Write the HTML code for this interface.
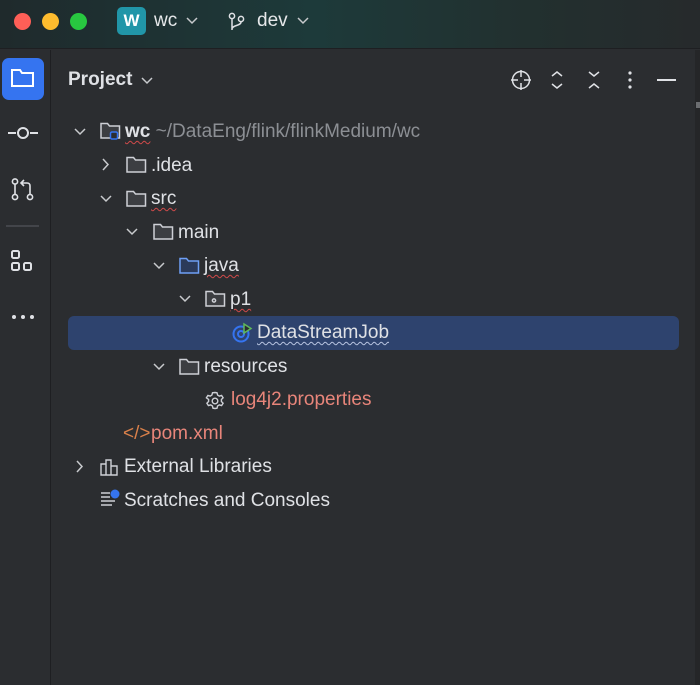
<!DOCTYPE html>
<html><head><style>
*{margin:0;padding:0;box-sizing:border-box}
body{width:700px;height:685px;background:#2b2d30;font-family:"Liberation Sans",sans-serif;color:#dfe1e5;position:relative;overflow:hidden}
.title{position:absolute;left:0;top:0;width:700px;height:49px;background:linear-gradient(90deg,#1f2a2c 0%,#1d3a3a 45%,#22302f 75%,#262a2c 100%);border-bottom:1px solid #1e1f22}
.dot{position:absolute;top:13px;width:17px;height:17px;border-radius:50%}
.side{position:absolute;left:0;top:50px;width:51px;height:635px;border-right:1px solid #1e1f22;background:#2b2d30}
.a{position:absolute}
.t{position:absolute;font-size:19px;line-height:22px;white-space:nowrap}
.u{text-decoration:underline wavy #d04a4a;text-decoration-thickness:1px;text-underline-offset:3px}
svg{position:absolute;overflow:visible}
</style></head><body>
<div class="title">
<div class="dot" style="left:14px;background:#fe5f57"></div>
<div class="dot" style="left:42px;background:#febc2e"></div>
<div class="dot" style="left:70px;background:#28c840"></div>
<div class="a" style="left:117px;top:7px;width:29px;height:28px;border-radius:5px;background:#2196a8;color:#fff;font-weight:bold;font-size:17px;text-align:center;line-height:28px">W</div>
<div class="t" style="left:154px;top:10px;color:#e6e8ea">wc</div>
<svg style="left:186px;top:17px" width="12" height="8"><path d="M1 1l5 5 5-5" stroke="#c8cacd" stroke-width="1.5" fill="none"/></svg>
<svg style="left:228px;top:12px" width="18" height="20" fill="none" stroke="#dfe1e5" stroke-width="1.5"><circle cx="4" cy="4" r="2.6"/><circle cx="13" cy="7" r="2.6"/><path d="M4 7v11M13 10c0 4-9 3-9 7"/></svg>
<div class="t" style="left:257px;top:10px;color:#e6e8ea">dev</div>
<svg style="left:297px;top:17px" width="12" height="8"><path d="M1 1l5 5 5-5" stroke="#c8cacd" stroke-width="1.5" fill="none"/></svg>
</div>
<div class="side">
<div class="a" style="left:2px;top:8px;width:42px;height:42px;border-radius:7px;background:#3574f0"></div>
<svg style="left:11px;top:18px" width="24" height="20" fill="none" stroke="#fff" stroke-width="2"><path d="M1 2h8l2 3h11v13H1z"/></svg>
<svg style="left:8px;top:76px" width="30" height="14" fill="none" stroke="#dfe1e5" stroke-width="2"><path d="M0 7h8M22 7h8"/><circle cx="15" cy="7" r="5"/></svg>
<svg style="left:11px;top:128px" width="24" height="24" fill="none" stroke="#dfe1e5" stroke-width="1.6"><circle cx="4" cy="3.5" r="2.6"/><circle cx="4" cy="19" r="2.6"/><circle cx="19" cy="19" r="2.6"/><path d="M4 6v10M19 16v-8c0-2-1-3-3-3h-5M13 2l-3 3 3 3"/></svg>
<div class="a" style="left:6px;top:175px;width:33px;height:2px;background:#43454a"></div>
<svg style="left:11px;top:200px" width="24" height="24" fill="none" stroke="#dfe1e5" stroke-width="2"><rect x="1" y="1" width="7" height="7" rx="1.5"/><rect x="1" y="13" width="7" height="7" rx="1.5"/><rect x="13" y="13" width="7" height="7" rx="1.5"/></svg>
<svg style="left:12px;top:264px" width="24" height="6" fill="#dfe1e5"><circle cx="2" cy="3" r="2"/><circle cx="11" cy="3" r="2"/><circle cx="20" cy="3" r="2"/></svg>
</div>
<div class="a" style="left:695px;top:50px;width:5px;height:635px;background:#252628"></div>
<div class="a" style="left:696px;top:102px;width:4px;height:6px;background:#6b6d70"></div>

<div class="t" style="left:68px;top:69px;font-weight:bold;color:#dfe1e5">Project</div>
<svg style="left:141px;top:77px" width="12" height="8"><path d="M1 1l5 5 5-5" stroke="#c8cacd" stroke-width="1.5" fill="none"/></svg>
<svg style="left:511px;top:70px" width="20" height="20" fill="none" stroke="#dfe1e5" stroke-width="1.5"><circle cx="10" cy="10" r="8.5"/><path d="M10 0v7M10 13v7M0 10h7M13 10h7"/></svg>
<svg style="left:551px;top:71px" width="12" height="18" fill="none" stroke="#dfe1e5" stroke-width="1.5"><path d="M1 5l5-4 5 4M1 13l5 4 5-4"/></svg>
<svg style="left:588px;top:71px" width="12" height="18" fill="none" stroke="#dfe1e5" stroke-width="1.5"><path d="M1 1l5 4 5-4M1 17l5-4 5 4"/></svg>
<svg style="left:627px;top:71px" width="6" height="18" fill="#dfe1e5"><circle cx="3" cy="2" r="1.6"/><circle cx="3" cy="9" r="1.6"/><circle cx="3" cy="16" r="1.6"/></svg>
<div class="a" style="left:657px;top:79px;width:19px;height:2px;background:#dfe1e5"></div>

<div class="a" style="left:68px;top:316px;width:611px;height:34px;border-radius:6px;background:#2e436e"></div>

<svg style="left:74px;top:128px" width="12" height="8"><path d="M1 1l5 5 5-5" stroke="#c8cacd" stroke-width="1.5" fill="none"/></svg>
<svg style="left:102px;top:158px" width="8" height="13"><path d="M1 1l5 5.5-5 5.5" stroke="#c8cacd" stroke-width="1.5" fill="none"/></svg>
<svg style="left:100px;top:195px" width="12" height="8"><path d="M1 1l5 5 5-5" stroke="#c8cacd" stroke-width="1.5" fill="none"/></svg>
<svg style="left:126px;top:228px" width="12" height="8"><path d="M1 1l5 5 5-5" stroke="#c8cacd" stroke-width="1.5" fill="none"/></svg>
<svg style="left:153px;top:262px" width="12" height="8"><path d="M1 1l5 5 5-5" stroke="#c8cacd" stroke-width="1.5" fill="none"/></svg>
<svg style="left:179px;top:295px" width="12" height="8"><path d="M1 1l5 5 5-5" stroke="#c8cacd" stroke-width="1.5" fill="none"/></svg>
<svg style="left:153px;top:363px" width="12" height="8"><path d="M1 1l5 5 5-5" stroke="#c8cacd" stroke-width="1.5" fill="none"/></svg>
<svg style="left:76px;top:460px" width="8" height="13"><path d="M1 1l5 5.5-5 5.5" stroke="#c8cacd" stroke-width="1.5" fill="none"/></svg>

<svg style="left:100px;top:122px" width="21" height="19" fill="#3c3e42" stroke="#ced0d6" stroke-width="1.5"><path d="M1 1.5h6.5l2 2.5h10v12H1z"/><rect x="10.5" y="10" width="7" height="7" rx="1.5" fill="#2b2d30" stroke="#3574f0"/></svg>
<svg style="left:126px;top:156px" width="21" height="18" fill="#3c3e42" stroke="#ced0d6" stroke-width="1.5"><path d="M1 1.5h6.5l2 2.5h10v12H1z"/></svg>
<svg style="left:126px;top:190px" width="21" height="18" fill="#3c3e42" stroke="#ced0d6" stroke-width="1.5"><path d="M1 1.5h6.5l2 2.5h10v12H1z"/></svg>
<svg style="left:153px;top:223px" width="21" height="18" fill="#3c3e42" stroke="#ced0d6" stroke-width="1.5"><path d="M1 1.5h6.5l2 2.5h10v12H1z"/></svg>
<svg style="left:179px;top:257px" width="21" height="18" fill="#2b3a5a" stroke="#6e9ff5" stroke-width="1.5"><path d="M1 1.5h6.5l2 2.5h10v12H1z"/></svg>
<svg style="left:205px;top:290px" width="21" height="18" fill="#3c3e42" stroke="#ced0d6" stroke-width="1.5"><path d="M1 1.5h6.5l2 2.5h10v12H1z"/><circle cx="9" cy="10.5" r="1.6" fill="none"/></svg>
<svg style="left:232px;top:323px" width="21" height="20"><circle cx="9" cy="11" r="7.5" fill="none" stroke="#3574f0" stroke-width="2"/><circle cx="9" cy="11" r="3" fill="none" stroke="#3574f0" stroke-width="2"/><path d="M12 1v9l7-4.5z" fill="#2b2d30" stroke="#5fb85a" stroke-width="1.5"/></svg>
<svg style="left:179px;top:358px" width="21" height="18" fill="#3c3e42" stroke="#ced0d6" stroke-width="1.5"><path d="M1 1.5h6.5l2 2.5h10v12H1z"/></svg>
<svg style="left:205px;top:391px" width="20" height="20" fill="none" stroke="#ced0d6" stroke-width="1.4"><path d="M10 1.5l2 .3.6 2.3 1.7 1 2.3-.7 1.5 2.4-1.7 1.7v2l1.7 1.7-1.5 2.4-2.3-.7-1.7 1-.6 2.3-2 .3-2-.3-.6-2.3-1.7-1-2.3.7-1.5-2.4 1.7-1.7v-2L1.4 6.8l1.5-2.4 2.3.7 1.7-1 .6-2.3z"/><circle cx="10" cy="10" r="2.8"/></svg>
<div class="t" style="left:123px;top:423px;color:#d9804a">&lt;/&gt;</div>
<svg style="left:100px;top:458px" width="20" height="18" fill="none" stroke="#ced0d6" stroke-width="1.4"><path d="M1 6h5v11H1zM6 2h5v15H6zM11 8h6v9h-6z"/></svg>
<svg style="left:100px;top:489px" width="22" height="20" fill="none" stroke="#ced0d6" stroke-width="1.4"><path d="M1 4h9M1 8h9M1 12h14M1 16h11"/><circle cx="15" cy="5" r="4.5" fill="#3574f0" stroke="none"/></svg>

<div class="t" style="left:125px;top:121px;font-weight:bold"><span class="u">wc</span> <span style="color:#8c8f94;font-weight:normal">~/DataEng/flink/flinkMedium/wc</span></div>
<div class="t" style="left:151px;top:155px">.idea</div>
<div class="t" style="left:151px;top:188px"><span class="u">src</span></div>
<div class="t" style="left:178px;top:222px">main</div>
<div class="t" style="left:204px;top:255px"><span class="u">java</span></div>
<div class="t" style="left:230px;top:289px"><span class="u">p1</span></div>
<div class="t" style="left:257px;top:322px"><span style="text-decoration:underline wavy #b8c4e0;text-decoration-thickness:1px;text-underline-offset:3px">DataStreamJob</span></div>
<div class="t" style="left:204px;top:356px">resources</div>
<div class="t" style="left:231px;top:389px;color:#e8857a">log4j2.properties</div>
<div class="t" style="left:151px;top:423px;color:#e8857a">pom.xml</div>
<div class="t" style="left:124px;top:456px">External Libraries</div>
<div class="t" style="left:124px;top:490px">Scratches and Consoles</div>
</body></html>
